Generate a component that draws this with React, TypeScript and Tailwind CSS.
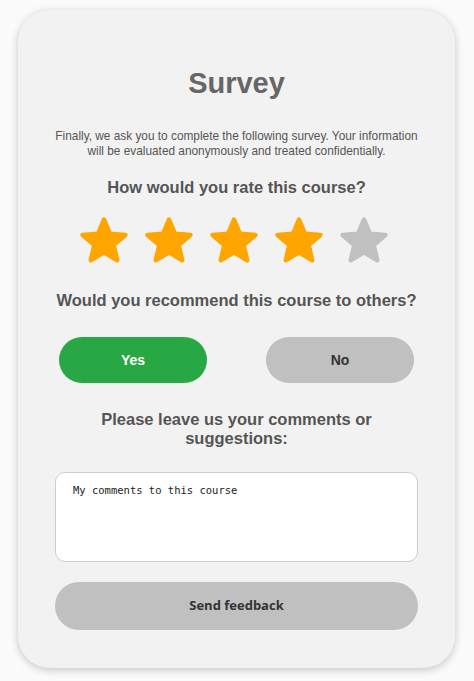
import React from "react";

function starPoints(cx: number, cy: number, R: number, r: number) {
  const pts: string[] = [];
  for (let i = 0; i < 10; i++) {
    const rad = i % 2 === 0 ? R : r;
    const a = (Math.PI / 5) * i - Math.PI / 2;
    pts.push(`${(cx + rad * Math.cos(a)).toFixed(2)},${(cy + rad * Math.sin(a)).toFixed(2)}`);
  }
  return pts.join(" ");
}

function Star({ color }: { color: string }) {
  return (
    <svg width="50" height="50" viewBox="0 0 50 50">
      <polygon
        points={starPoints(25, 26, 22.5, 10.2)}
        fill={color}
        stroke={color}
        strokeWidth="4.5"
        strokeLinejoin="round"
      />
    </svg>
  );
}

export default function App() {
  const stars = ["#ffa500", "#ffa500", "#ffa500", "#ffa500", "#c0c0c0"];
  return (
    <div className="min-h-[681px] w-[474px] bg-[#fbfbfb] pt-[10px] font-['Liberation_Sans',Arial,sans-serif]">
      <div className="mx-[18px] w-[437px] rounded-[32px] bg-[#f2f2f2] px-[37px] pt-[57px] pb-[38px] shadow-[0_2px_8px_rgba(0,0,0,0.22)]">
        <h1 className="text-center text-[29px] font-bold leading-[33px] text-[#666666]">Survey</h1>
        <p className="-mx-[8px] mt-[29px] text-center text-[11.85px] leading-[15px] text-[#555555]">
          Finally, we ask you to complete the following survey. Your information
          <br />
          will be evaluated anonymously and treated confidentially.
        </p>
        <h2 className="mt-[19px] text-center text-[16.5px] font-bold leading-[18px] text-[#555555]">
          How would you rate this course?
        </h2>
        <div className="mt-[20px] flex justify-center gap-[15px] pr-[6px]">
          {stars.map((c, i) => (
            <Star key={i} color={c} />
          ))}
        </div>
        <h2 className="-mx-[6px] mt-[25px] text-center text-[16.5px] font-bold leading-[18px] text-[#555555]">
          Would you recommend this course to others?
        </h2>
        <div className="mt-[28px] flex justify-between px-[4px]">
          <button className="h-[46px] w-[148px] rounded-full bg-[#28a745] text-[14px] font-bold text-white">Yes</button>
          <button className="h-[46px] w-[148px] rounded-full bg-[#c0c0c0] text-[14px] font-bold text-[#333333]">No</button>
        </div>
        <h3 className="mt-[27px] px-[40px] text-center text-[16.5px] font-bold leading-[19px] text-[#555555]">
          Please leave us your comments or suggestions:
        </h3>
        <textarea
          className="mt-[24px] block h-[90px] w-full resize-none rounded-[10px] border border-[#cccccc] bg-white px-[17px] py-[10px] font-['DejaVu_Sans_Mono',monospace] text-[10.5px] leading-[14px] text-[#222222] outline-none"
          defaultValue="My comments to this course"
        />
        <button className="mt-[20px] h-[48px] w-full rounded-full bg-[#c0c0c0] font-['Open_Sans',sans-serif] text-[13px] font-bold text-[#333333]">
          Send feedback
        </button>
      </div>
    </div>
  );
}
